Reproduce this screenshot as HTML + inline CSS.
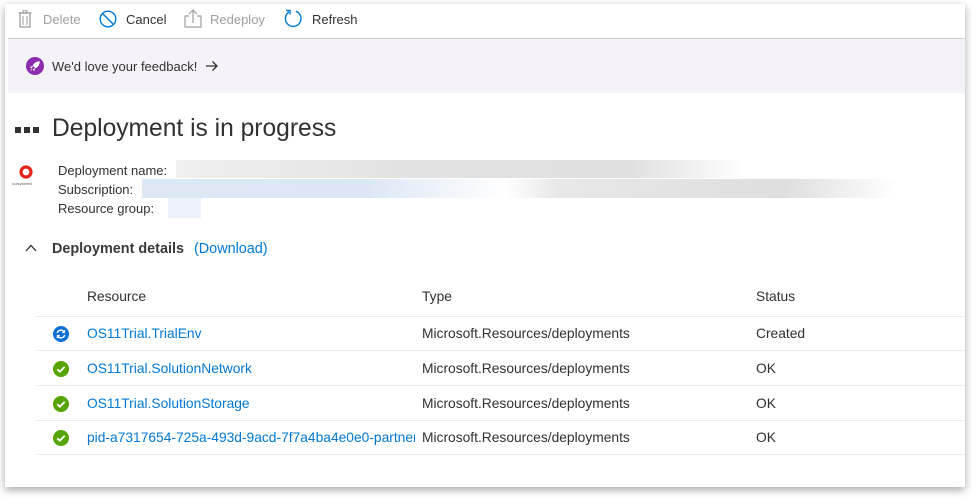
<!DOCTYPE html>
<html><head><style>
body{margin:0;width:980px;height:502px;background:#fff;font-family:"Liberation Sans",sans-serif;position:relative;overflow:hidden;color:#323130}
.card{position:absolute;left:5px;top:4px;width:960px;height:483px;background:#fff;box-shadow:0 3px 8px rgba(0,0,0,.35)}
.a{position:absolute;white-space:nowrap}
.tb{font-size:13px;top:12px}
.dis{color:#a19f9d}
.line{position:absolute;height:1px;background:#edebe9}
.link{color:#0078d4}
.row{font-size:13.8px}
</style></head><body>
<div class="card"></div>
<svg class="a" style="left:18px;top:10px" width="14" height="18" viewBox="0 0 14 18"><rect x="2" y="3" width="10" height="14" fill="none" stroke="#a19f9d" stroke-width="1.3"/><line x1="0.5" y1="3" x2="13.5" y2="3" stroke="#a19f9d" stroke-width="1.3"/><rect x="5" y="0.7" width="4" height="2.3" fill="none" stroke="#a19f9d"/><line x1="5" y1="6" x2="5" y2="15" stroke="#a19f9d"/><line x1="9" y1="6" x2="9" y2="15" stroke="#a19f9d"/></svg>
<div class="a tb dis" style="left:43px">Delete</div>
<svg class="a" style="left:99px;top:10px" width="18" height="18" viewBox="0 0 18 18"><circle cx="9" cy="9" r="7.8" fill="none" stroke="#0078d4" stroke-width="1.4"/><line x1="3.5" y1="3.5" x2="14.5" y2="14.5" stroke="#0078d4" stroke-width="1.4"/></svg>
<div class="a tb" style="left:126px">Cancel</div>
<svg class="a" style="left:184px;top:9px" width="18" height="19" viewBox="0 0 18 19"><path d="M5 7H1v11h16V7h-4" fill="none" stroke="#a19f9d" stroke-width="1.2"/><path d="M9 14V1M5 5l4-4 4 4" fill="none" stroke="#a19f9d" stroke-width="1.2"/></svg>
<div class="a tb dis" style="left:210px">Redeploy</div>
<svg class="a" style="left:284px;top:9px" width="19" height="19" viewBox="0 0 19 19"><path d="M12 2.3A7.8 7.8 0 1 1 5 3" fill="none" stroke="#0078d4" stroke-width="1.4"/><path d="M2 1.5h4v4" fill="none" stroke="#0078d4" stroke-width="1.4"/></svg>
<div class="a tb" style="left:312px">Refresh</div>
<div class="line" style="left:8px;top:38px;width:957px;background:#d2d0ce"></div>
<div class="a" style="left:8px;top:39px;width:957px;height:54px;background:#f6f2fa"></div>
<svg class="a" style="left:26px;top:57px" width="18" height="18" viewBox="0 0 18 18"><circle cx="9" cy="9" r="9" fill="#8b2dae"/><path d="M13.5 4.5c-3 0-5 1.5-6.5 4l2.5 2.5c2.5-1.5 4-3.5 4-6.5zM6.5 9.5 4.5 10l1 1zM8.5 11.5 8 13.5l-1-1zM6 12l-1.5 1.5" fill="#fff" stroke="#fff" stroke-width=".6"/></svg>
<div class="a" style="left:52px;top:59px;font-size:13px">We'd love your feedback!</div>
<svg class="a" style="left:205px;top:60px" width="14" height="12" viewBox="0 0 14 12"><path d="M1 6h11M7.5 1.5 12 6l-4.5 4.5" fill="none" stroke="#323130" stroke-width="1.3"/></svg>
<div class="a" style="left:15px;top:127px;width:6px;height:6px;background:#323130"></div>
<div class="a" style="left:24px;top:127px;width:6px;height:6px;background:#323130"></div>
<div class="a" style="left:33px;top:127px;width:6px;height:6px;background:#323130"></div>
<div class="a" style="left:52px;top:115px;font-size:24.6px">Deployment is in progress</div>
<svg class="a" style="left:19px;top:165px" width="14" height="14" viewBox="0 0 14 14"><circle cx="7" cy="7" r="5" fill="none" stroke="#e5231b" stroke-width="3.2"/></svg>
<div class="a" style="left:12px;top:181px;font-size:4px;color:#666">outsystems</div>
<div class="a" style="left:58px;top:161px;font-size:13px;line-height:19px">Deployment name:<br>Subscription:<br>Resource group:</div>
<div class="a" style="left:176px;top:160px;width:570px;height:18px;background:linear-gradient(90deg,#f0f0f0,#e2e2e2 40%,#e0e0e0 80%,#fff)"></div>
<div class="a" style="left:142px;top:179px;width:755px;height:19px;background:linear-gradient(90deg,#dde8f5,#dce7f5 30%,#fff 48%,#e8e8e8 55%,#dedede 85%,#fff)"></div>
<div class="a" style="left:168px;top:198px;width:33px;height:20px;background:#eef3fb"></div>
<svg class="a" style="left:25px;top:244px" width="12" height="8" viewBox="0 0 12 8"><path d="M1 7l5-5.5L11 7" fill="none" stroke="#323130" stroke-width="1.3"/></svg>
<div class="a" style="left:52px;top:241px;font-size:14.4px;font-weight:bold;color:#3b3a39">Deployment details</div>
<div class="a link" style="left:194px;top:241px;font-size:14.4px">(Download)</div>
<div class="a row" style="left:87px;top:289px">Resource</div>
<div class="a row" style="left:422px;top:289px">Type</div>
<div class="a row" style="left:756px;top:289px">Status</div>
<div class="line" style="left:36px;top:316px;width:929px"></div>
<div class="line" style="left:36px;top:350px;width:929px"></div>
<div class="line" style="left:36px;top:385px;width:929px"></div>
<div class="line" style="left:36px;top:420px;width:929px"></div>
<div class="line" style="left:36px;top:454px;width:929px"></div>
<svg class="a" style="left:53px;top:326px" width="16" height="16" viewBox="0 0 16 16"><circle cx="8" cy="8" r="8" fill="#0f6fd6"/><path d="M4.3 7a3.8 3.8 0 0 1 6.8-1.2M11.7 9a3.8 3.8 0 0 1-6.8 1.2" fill="none" stroke="#fff" stroke-width="1.4"/><path d="M11.6 4v2.5H9.2M4.4 12V9.5h2.4" fill="none" stroke="#fff" stroke-width="1.2"/></svg>
<div class="a row link" style="left:87px;top:326px">OS11Trial.TrialEnv</div>
<div class="a row" style="left:422px;top:326px">Microsoft.Resources/deployments</div>
<div class="a row" style="left:756px;top:326px">Created</div>
<svg class="a" style="left:53px;top:361px" width="16" height="16" viewBox="0 0 16 16"><circle cx="8" cy="8" r="8" fill="#57a300"/><path d="M4.3 8.3l2.5 2.4 4.9-5" fill="none" stroke="#fff" stroke-width="1.8"/></svg>
<div class="a row link" style="left:87px;top:361px">OS11Trial.SolutionNetwork</div>
<div class="a row" style="left:422px;top:361px">Microsoft.Resources/deployments</div>
<div class="a row" style="left:756px;top:361px">OK</div>
<svg class="a" style="left:53px;top:396px" width="16" height="16" viewBox="0 0 16 16"><circle cx="8" cy="8" r="8" fill="#57a300"/><path d="M4.3 8.3l2.5 2.4 4.9-5" fill="none" stroke="#fff" stroke-width="1.8"/></svg>
<div class="a row link" style="left:87px;top:396px">OS11Trial.SolutionStorage</div>
<div class="a row" style="left:422px;top:396px">Microsoft.Resources/deployments</div>
<div class="a row" style="left:756px;top:396px">OK</div>
<svg class="a" style="left:53px;top:430px" width="16" height="16" viewBox="0 0 16 16"><circle cx="8" cy="8" r="8" fill="#57a300"/><path d="M4.3 8.3l2.5 2.4 4.9-5" fill="none" stroke="#fff" stroke-width="1.8"/></svg>
<div class="a row link" style="left:87px;top:430px;width:328px;overflow:hidden">pid-a7317654-725a-493d-9acd-7f7a4ba4e0e0-partner</div>
<div class="a row" style="left:422px;top:430px">Microsoft.Resources/deployments</div>
<div class="a row" style="left:756px;top:430px">OK</div>
</body></html>
